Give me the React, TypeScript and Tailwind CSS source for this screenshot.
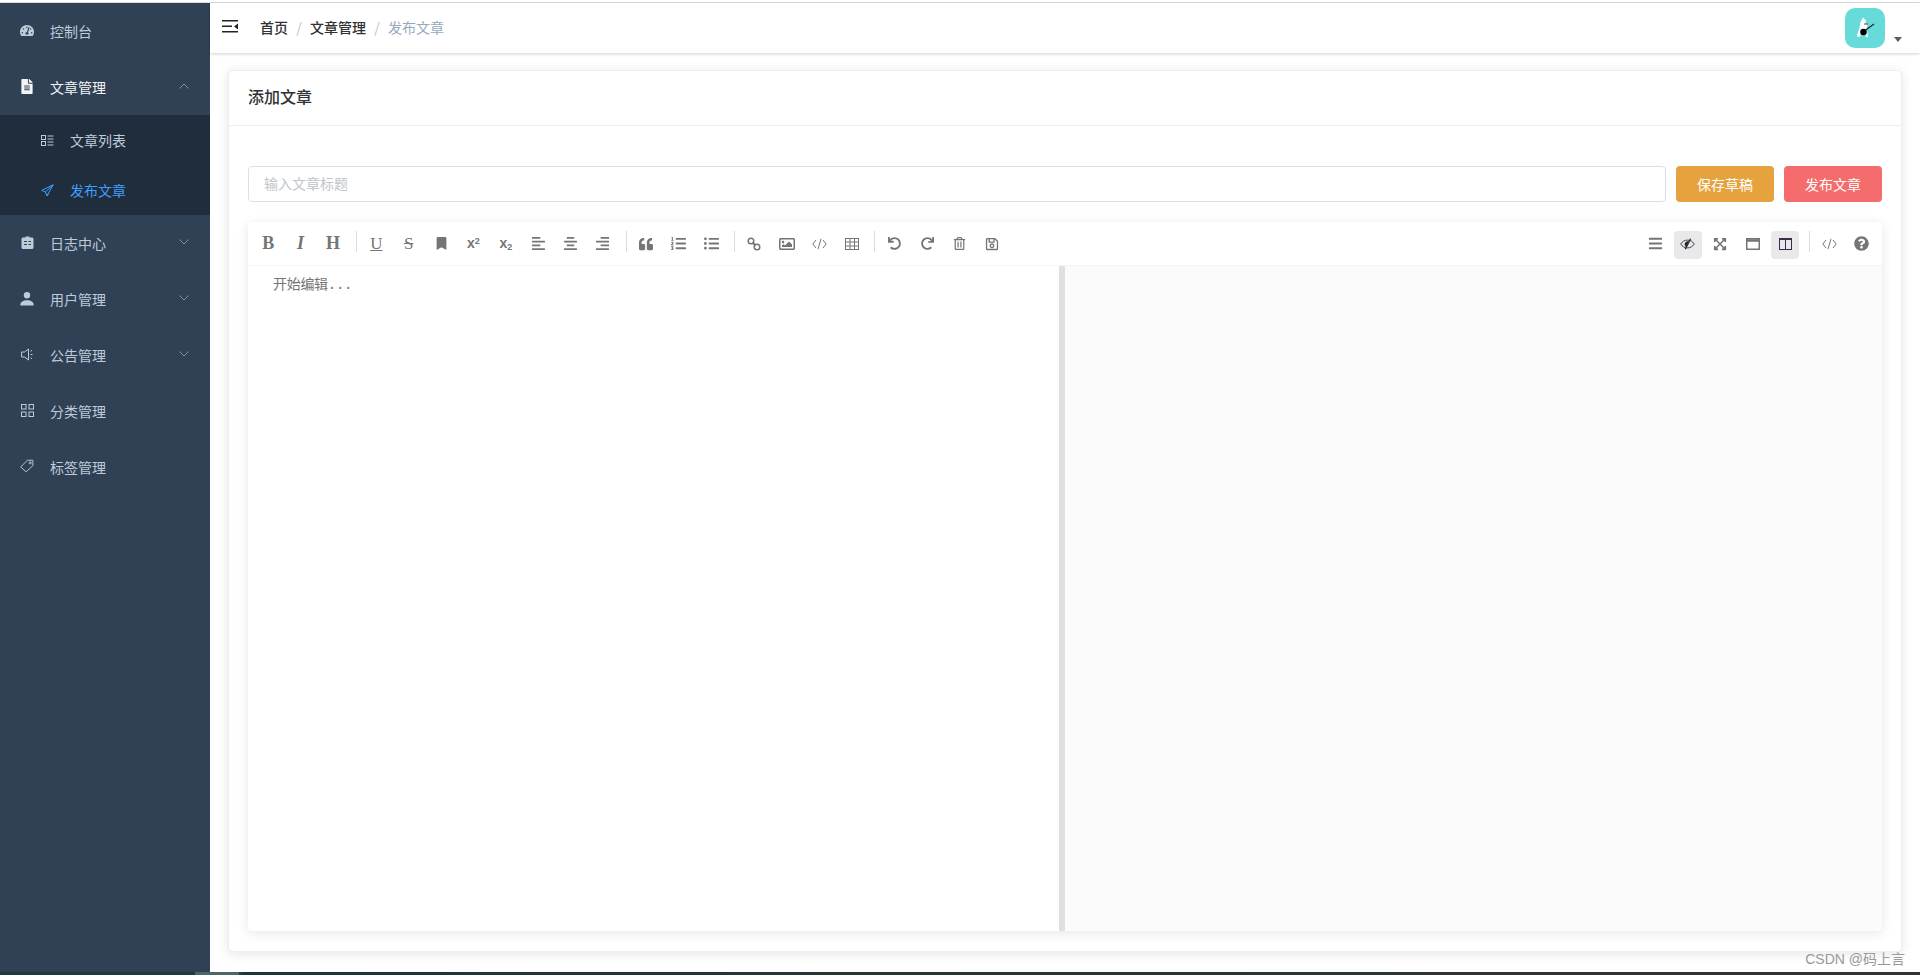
import type { ReactNode } from "react";
import {
  FaAlignCenter,
  FaAlignLeft,
  FaAlignRight,
  FaBars,
  FaBookmark,
  FaExpandArrowsAlt,
  FaFileAlt,
  FaListOl,
  FaListUl,
  FaQuestionCircle,
  FaQuoteLeft,
  FaRedo,
  FaRegImage,
  FaRegSave,
  FaRegTrashAlt,
  FaTachometerAlt,
  FaUndo,
} from "react-icons/fa";

function ListIcon() {
  return (
    <svg width="13" height="13" viewBox="0 0 13 13" fill="none" stroke="currentColor">
      <rect x="0.5" y="1.5" width="4" height="4" />
      <rect x="0.5" y="7.5" width="4" height="4" />
      <path d="M6.5 2h6M6.5 5h6M6.5 8h6M6.5 11h6" />
    </svg>
  );
}

function PlaneIcon() {
  return (
    <svg width="13" height="13" viewBox="0 0 13 13" fill="none" stroke="currentColor" strokeLinejoin="round">
      <path d="M12.2 0.8 0.8 6.4l3.6 1.6 1.5 3.9L12.2.8ZM4.4 8 12.2.8M7.8 9l-1.9 2.9" />
    </svg>
  );
}

function ClipboardIcon() {
  return (
    <svg width="13" height="13" viewBox="0 0 13 13" fill="currentColor">
      <path d="M2 1.500h2.500V.5h4v1H11c.8 0 1.500.7 1.500 1.500v8.500c0 .8-.7 1.500-1.500 1.500H2c-.8 0-1.500-.7-1.500-1.500V3c0-.8.7-1.500 1.500-1.500Z" />
      <path d="M3 5h3v1H3zM3 8h3v1H3zM7.500 5H10v1H7.500zM7.500 8H10v1H7.500z" fill="#304156" />
    </svg>
  );
}

function UserIcon() {
  return (
    <svg width="15" height="15" viewBox="0 0 15 15" fill="currentColor">
      <circle cx="7.5" cy="4" r="3.4" />
      <path d="M0.3 14.5c0-3 3-5 7.2-5s7.2 2 7.2 5c0 .3-.2.5-.5.5H.8c-.3 0-.5-.2-.5-.5Z" />
    </svg>
  );
}

function SpeakerIcon() {
  return (
    <svg width="13" height="13" viewBox="0 0 13 13" fill="none" stroke="currentColor">
      <path d="M7.5 1 3.5 4H.6v5h2.9l4 3V1Z" strokeLinejoin="round" />
      <path d="M9.5 3.2 11 2.4M9.5 6.5h2M9.5 9.8l1.5.8" />
    </svg>
  );
}

function GridIcon() {
  return (
    <svg width="13" height="13" viewBox="0 0 13 13" fill="none" stroke="currentColor">
      <rect x="0.5" y="0.5" width="4.5" height="4.5" />
      <rect x="8" y="0.5" width="4.5" height="4.5" />
      <rect x="0.5" y="8" width="4.5" height="4.5" />
      <rect x="8" y="8" width="4.5" height="4.5" />
    </svg>
  );
}

function TagIcon() {
  return (
    <svg width="15" height="14" viewBox="0 0 15 14" fill="none" stroke="currentColor" strokeLinejoin="round">
      <path d="M0.7 8 8 .8h5.8V6.6L6.6 13.3 0.7 8Z" />
      <circle cx="11" cy="3.6" r="1.1" />
    </svg>
  );
}

function Chevron({ up }: { up?: boolean }) {
  return (
    <svg width="10" height="6" viewBox="0 0 10 6" fill="none" stroke="#8392a5" className="ml-auto mr-[21px] mb-[3px]">
      <path d={up ? "M0.5 5.5 5 1l4.5 4.5" : "M0.5 0.5 5 5l4.5-4.5"} />
    </svg>
  );
}

function CodeIcon() {
  return (
    <svg width="15" height="12" viewBox="0 0 15 12" fill="none" stroke="currentColor" strokeWidth="1">
      <path d="M4 2 .8 6 4 10M11 2l3.2 4L11 10M9 .8 6 11.2" />
    </svg>
  );
}

function LinkIcon() {
  return (
    <svg width="14" height="14" viewBox="0 0 14 14" fill="none" stroke="currentColor" strokeWidth="1.5">
      <circle cx="4" cy="4" r="2.8" />
      <circle cx="10" cy="10" r="2.8" />
      <path d="m5.5 5.5 3 3" strokeWidth="2" />
    </svg>
  );
}

function TableIcon() {
  return (
    <svg width="14" height="12" viewBox="0 0 14 12" fill="none" stroke="currentColor">
      <rect x="0.5" y="0.5" width="13" height="11" />
      <path d="M0.5 4h13M0.5 8h13M5 .5v11M9.500 .5v11" />
    </svg>
  );
}

function EyeIcon() {
  return (
    <svg width="15" height="12" viewBox="0 0 15 12" fill="none" stroke="#444">
      <path d="M.7 6c1.700-2.600 4-3.900 6.800-3.900S12.600 3.400 14.300 6c-1.700 2.600-4 3.900-6.800 3.900S2.400 8.600.7 6Z" />
      <path d="M4.800 5.500c.6-1.700 2-2.600 4-2.600L6 9c-.9-.8-1.500-2.100-1.200-3.500Z" fill="#222" stroke="none" />
      <path d="M10.500.8 5.300 11.200" stroke="#222" strokeWidth="1.300" />
    </svg>
  );
}

function WindowIcon() {
  return (
    <svg width="14" height="12" viewBox="0 0 14 12" fill="none" stroke="currentColor">
      <rect x="0.750" y="0.750" width="12.500" height="10.500" strokeWidth="1.500" />
      <path d="M.5 2.500h13" strokeWidth="2.500" />
    </svg>
  );
}

function SplitIcon() {
  return (
    <svg width="13" height="12" viewBox="0 0 13 12" fill="none" stroke="#3c2a4a" strokeWidth="1">
      <rect x="0.5" y="0.500" width="12" height="11" />
      <path d="M0.500 1h12" strokeWidth="2" />
      <path d="M6.500 .5v11" />
    </svg>
  );
}

function SideToggle() {
  return (
    <svg width="16" height="13" viewBox="0 0 16 13" fill="#222">
      <rect x="0" y="0" width="16" height="1.500" />
      <rect x="0" y="5.500" width="10" height="1.500" />
      <rect x="0" y="11" width="16" height="1.500" />
      <path d="M16 3.500v6l-4-3 4-3Z" />
    </svg>
  );
}

function Avatar() {
  return (
    <div className="w-10 h-10 rounded-[10px] bg-[#66dbd9] flex items-center justify-center">
      <svg width="40" height="40" viewBox="0 0 40 40">
        <path d="M18 10c-1.500 1.500-2.500 3.500-3 6l-.5 4-2.500 7 .5 2 2.500-.5 1-3 4 .5 1 3 2 .5-.5-5-1-4 1-3-2-2 .5-3-3-3Z" fill="#fff" />
        <circle cx="18.500" cy="24" r="3.300" fill="#000" />
        <path d="m20 22.500 9-6.500" stroke="#222" strokeWidth="1.200" />
        <path d="M19 16h4" stroke="#555" strokeWidth="1" />
      </svg>
    </div>
  );
}

type MenuItem = { label: string; icon: ReactNode; arrow?: "up" | "down"; open?: boolean };

const MENU: MenuItem[] = [
  { label: "控制台", icon: <FaTachometerAlt size={15} /> },
  { label: "文章管理", icon: <FaFileAlt size={15} />, arrow: "up", open: true },
  { label: "日志中心", icon: <ClipboardIcon />, arrow: "down" },
  { label: "用户管理", icon: <UserIcon />, arrow: "down" },
  { label: "公告管理", icon: <SpeakerIcon />, arrow: "down" },
  { label: "分类管理", icon: <GridIcon /> },
  { label: "标签管理", icon: <TagIcon /> },
];

function Sidebar() {
  return (
    <aside className="w-[210px] shrink-0 bg-[#304156] text-[14px] text-[#bfcbd9]">
      {MENU.map((item) => (
        <div key={item.label}>
          <div className={`h-14 flex items-center pl-5 ${item.open ? "text-[#f4f4f5]" : ""}`}>
            <span className="w-[14px] flex justify-center mr-4 mb-[2px]">{item.icon}</span>
            <span>{item.label}</span>
            {item.arrow && <Chevron up={item.arrow === "up"} />}
          </div>
          {item.open && (
            <div className="bg-[#1f2d3d]">
              <div className="h-[50px] flex items-center pl-10">
                <span className="w-[14px] flex justify-center mr-4">
                  <ListIcon />
                </span>
                <span>文章列表</span>
              </div>
              <div className="h-[50px] flex items-center pl-10 text-[#409eff]">
                <span className="w-[14px] flex justify-center mr-4">
                  <PlaneIcon />
                </span>
                <span>发布文章</span>
              </div>
            </div>
          )}
        </div>
      ))}
    </aside>
  );
}

function Navbar() {
  return (
    <header className="h-[50px] shrink-0 flex items-center bg-white shadow-[0_1px_3px_rgba(0,21,41,0.2)] relative">
      <div className="ml-3 mb-[4px]">
        <SideToggle />
      </div>
      <nav className="ml-[22px] mb-[1px] flex items-center text-[14px] font-medium text-[#303133]">
        <span>首页</span>
        <span className="w-[22px] text-center font-normal text-[#c0c4cc]">/</span>
        <span>文章管理</span>
        <span className="w-[22px] text-center font-normal text-[#c0c4cc]">/</span>
        <span className="font-normal text-[#97a8be]">发布文章</span>
      </nav>
      <div className="ml-auto mr-[18px] flex items-end">
        <Avatar />
        <span className="ml-[9px] mb-[6px] w-0 h-0 border-x-[4px] border-x-transparent border-t-[5px] border-t-[#5a5e66]" />
      </div>
    </header>
  );
}

function ToolBtn({ children, active }: { children: ReactNode; active?: boolean }) {
  return (
    <div className={`w-7 h-7 mx-[2.2px] pb-[3px] rounded-[4px] flex items-center justify-center ${active ? "bg-[#e9e9eb]" : ""}`}>
      {children}
    </div>
  );
}

function Sep({ wide }: { wide?: boolean }) {
  return <div className={`w-px h-[21px] bg-[#dddddd] ${wide ? "ml-[7.5px] mr-[3.5px]" : "ml-[6.5px] mr-[3.5px]"}`} />;
}

function Toolbar() {
  return (
    <div className="h-[44px] shrink-0 flex justify-between px-1 pt-[9px] border-b border-[#f2f6fc] text-[#757575]">
      <div className="flex items-start">
        <ToolBtn><span className="text-[18px] font-bold [font-family:'Liberation_Serif',serif]">B</span></ToolBtn>
        <ToolBtn><span className="text-[18px] font-bold italic [font-family:'Liberation_Serif',serif]">I</span></ToolBtn>
        <ToolBtn><span className="text-[18px] font-bold [font-family:'Liberation_Serif',serif]">H</span></ToolBtn>
        <Sep />
        <ToolBtn><span className="text-[17px] font-medium underline [font-family:'Liberation_Serif',serif]">U</span></ToolBtn>
        <ToolBtn><span className="text-[17px] line-through [font-family:'Liberation_Serif',serif]">S</span></ToolBtn>
        <ToolBtn><FaBookmark size={13} /></ToolBtn>
        <ToolBtn><span className="text-[14px] font-bold [font-family:'Liberation_Sans',sans-serif]">x<sup className="text-[9px]">2</sup></span></ToolBtn>
        <ToolBtn><span className="text-[14px] font-bold [font-family:'Liberation_Sans',sans-serif]">x<sub className="text-[9px]">2</sub></span></ToolBtn>
        <ToolBtn><FaAlignLeft size={15} /></ToolBtn>
        <ToolBtn><FaAlignCenter size={15} /></ToolBtn>
        <ToolBtn><FaAlignRight size={15} /></ToolBtn>
        <Sep />
        <ToolBtn><FaQuoteLeft size={14} /></ToolBtn>
        <ToolBtn><FaListOl size={15} /></ToolBtn>
        <ToolBtn><FaListUl size={15} /></ToolBtn>
        <Sep />
        <ToolBtn><LinkIcon /></ToolBtn>
        <ToolBtn><FaRegImage size={16} /></ToolBtn>
        <ToolBtn><CodeIcon /></ToolBtn>
        <ToolBtn><TableIcon /></ToolBtn>
        <Sep />
        <ToolBtn><FaUndo size={13} /></ToolBtn>
        <ToolBtn><FaRedo size={13} /></ToolBtn>
        <ToolBtn><FaRegTrashAlt size={13} /></ToolBtn>
        <ToolBtn><FaRegSave size={14} /></ToolBtn>
      </div>
      <div className="flex items-start">
        <ToolBtn><FaBars size={15} /></ToolBtn>
        <ToolBtn active><EyeIcon /></ToolBtn>
        <ToolBtn><FaExpandArrowsAlt size={14} /></ToolBtn>
        <ToolBtn><WindowIcon /></ToolBtn>
        <ToolBtn active><SplitIcon /></ToolBtn>
        <Sep wide />
        <ToolBtn><CodeIcon /></ToolBtn>
        <ToolBtn><FaQuestionCircle size={15} /></ToolBtn>
      </div>
    </div>
  );
}

function Editor() {
  return (
    <div className="flex-1 mt-5 flex flex-col rounded-[4px] bg-white shadow-[0_2px_12px_rgba(0,0,0,0.1)] overflow-hidden">
      <Toolbar />
      <div className="flex-1 flex">
        <div className="w-[811px] pl-[25px] pt-[9px] text-[14px] leading-[20px] tracking-[-0.3px] text-[#757575] [font-family:'Liberation_Mono','Noto_Sans_CJK_SC',monospace]">
          开始编辑...
        </div>
        <div className="w-[6px] bg-[#e0e0e0]" />
        <div className="flex-1 bg-[#fbfbfb]" />
      </div>
    </div>
  );
}

export default function App() {
  return (
    <div className="relative h-[975px] w-full flex flex-col overflow-hidden bg-white [font-family:'Noto_Sans_CJK_SC',sans-serif]">
      <div className="h-[2px] bg-white shrink-0" />
      <div className="h-px bg-[#dcdcdc] shrink-0" />
      <div className="flex-1 min-h-0 flex">
        <Sidebar />
        <div className="flex-1 min-w-0 flex flex-col">
          <Navbar />
          <main className="flex-1 min-h-0 pt-[17px] pb-5 px-[18px]">
            <div className="h-full flex flex-col rounded-[4px] border border-[#ebeef5] bg-white shadow-[0_2px_12px_rgba(0,0,0,0.1)]">
              <div className="h-[55px] shrink-0 flex items-center px-[19px] pb-1 border-b border-[#ebeef5] text-[16px] font-medium text-[#303133]">
                添加文章
              </div>
              <div className="flex-1 min-h-0 flex flex-col px-[19px] pt-10 pb-5">
                <div className="flex gap-[10px]">
                  <input
                    placeholder="输入文章标题"
                    className="flex-1 h-9 px-[15px] pb-[2px] rounded-[4px] border border-[#dcdfe6] text-[14px] outline-none placeholder:text-[#c0c4cc]"
                  />
                  <button className="w-[98px] h-9 rounded-[4px] bg-[#e6a23c] text-[14px] text-white">保存草稿</button>
                  <button className="w-[98px] h-9 rounded-[4px] bg-[#f56c6c] text-[14px] text-white">发布文章</button>
                </div>
                <Editor />
              </div>
            </div>
          </main>
        </div>
      </div>
      <div className="h-[3px] shrink-0 flex">
        <div className="w-[195px] bg-[#21383f]" />
        <div className="w-[44px] bg-[#4f6668]" />
        <div className="w-1 bg-[#2d3a3c]" />
        <div className="flex-1 bg-linear-to-r from-[#1e3538] to-[#333333]" />
      </div>
      <span className="absolute right-[15px] bottom-[8px] text-[14px] leading-[16px] text-[#999999] [font-family:'Liberation_Sans','Noto_Sans_CJK_SC',sans-serif]">
        CSDN @码上言
      </span>
    </div>
  );
}
